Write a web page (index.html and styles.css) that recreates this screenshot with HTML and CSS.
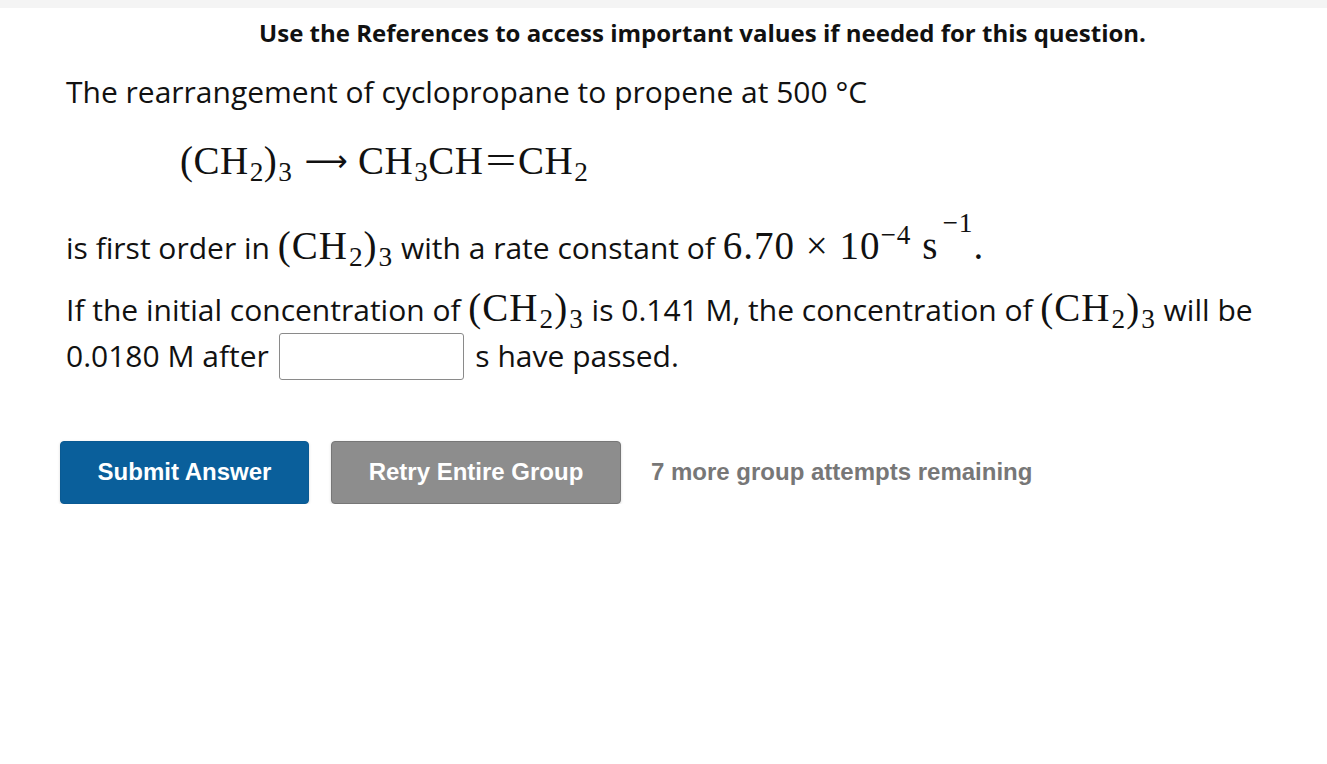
FILE: index.html
```html
<!DOCTYPE html>
<html>
<head>
<meta charset="utf-8">
<link rel="stylesheet" href="styles.css">
</head>
<body>
<div class="topbar"></div>
<div class="page">
  <p class="refs">Use the References to access important values if needed for this question.</p>
  <p class="line l1">The rearrangement of cyclopropane to propene at 500 °C</p>
  <p class="eq"><span class="m">(CH<sub>2</sub>)<sub>3</sub><span class="arrow">⟶</span>CH<sub>3</sub>CH<span class="eqs">=</span>CH<sub>2</sub></span></p>
  <p class="line l2">is first order in <span class="mi">(CH<sub>2</sub>)<sub>3</sub></span> with a rate constant of <span class="mi">6.70 × 10<sup>−4</sup> s<sup class="hi">−1</sup>.</span></p>
  <p class="line l3">If the initial concentration of <span class="mi">(CH<sub>2</sub>)<sub>3</sub></span> is 0.141 M, the concentration of <span class="mi">(CH<sub>2</sub>)<sub>3</sub></span> will be<br>0.0180 M after <input class="answer" type="text"> s have passed.</p>
  <div class="actions">
    <button class="btn submit">Submit Answer</button>
    <button class="btn retry">Retry Entire Group</button>
    <span class="remain">7 more group attempts remaining</span>
  </div>
</div>
</body>
</html>
```
FILE: styles.css
```css
html, body { margin: 0; padding: 0; background: #fff; }
body { font-family: "Open Sans", "Liberation Sans", sans-serif; color: #111; }
.topbar { height: 8px; background: #f4f4f4; }
.page { padding-left: 66px; }
p { margin: 0; }
.refs {
  font-weight: 700; font-size: 24px; text-align: center;
  padding-left: 12px; margin-top: 10px; line-height: 30px;
}
.line { font-size: 30px; }
.l1 { margin-top: 24px; line-height: 40px; }
.eq { margin-top: 26px; padding-left: 114px; line-height: 46px; }
.m, .mi { font-family: "Liberation Serif", "DejaVu Serif", serif; }
.m { font-size: 39px; letter-spacing: 0.5px; }
.mi { font-size: 39px; letter-spacing: 1px; }
.m sub, .mi sub { font-size: 0.7em; vertical-align: -0.25em; line-height: 0; margin-left: 1px; }
.mi sup, .m sup { font-size: 0.7em; vertical-align: 0.55em; line-height: 0; }
.mi sup.hi { vertical-align: 1.0em; margin-left: 4px; }
.arrow { font-family: "DejaVu Sans", sans-serif; font-size: 30px; padding: 0 10px 0 12px; position: relative; top: -3px; }
.eqs { display: inline-block; transform: scaleX(1.4); margin: 0 6px; }
.l2 { margin-top: 32px; line-height: 46px; }
.l3 { margin-top: 14px; line-height: 46px; }
.answer {
  width: 183px; height: 45px; box-sizing: content-box; padding: 0;
  border: 1px solid #8a8a8a; border-radius: 3px; vertical-align: middle;
  margin: 0 4px 0 2px; transform: translateY(-3px);
}
.actions { display: flex; align-items: center; margin-top: 58px; margin-left: -6px; }
.btn {
  font-family: "Liberation Sans", Arial, sans-serif; font-weight: 700; font-size: 24px;
  color: #fff; border-radius: 4px; height: 63px; cursor: pointer;
  box-shadow: 0 1px 3px rgba(0,0,0,0.15);
}
.submit { width: 249px; background: #0a5f9b; border: 1px solid #0a5a93; }
.retry { width: 290px; margin-left: 22px; background: #8d8d8d; border: 1px solid #777; }
.remain {
  font-family: "Liberation Sans", Arial, sans-serif; font-weight: 700; font-size: 24px;
  color: #777; margin-left: 30px;
}
```
